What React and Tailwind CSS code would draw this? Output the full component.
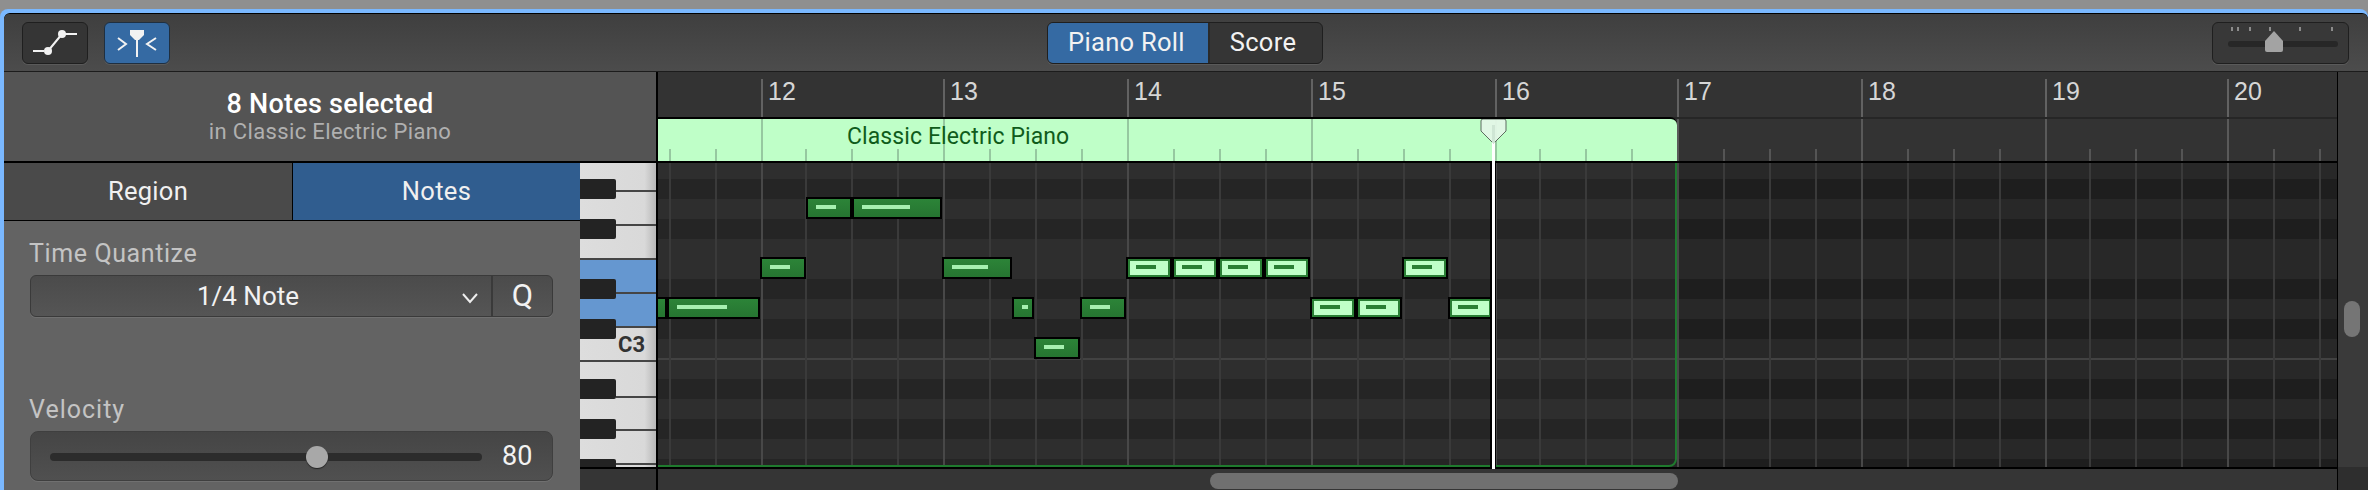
import React from "react";

const sf = "font-['Roboto','Inter',sans-serif]";
const bars = [761, 943, 1127, 1311, 1495, 1677, 1861, 2045, 2227];
const beats = [669, 715, 805, 851, 897, 989, 1035, 1081, 1173, 1219, 1265, 1357, 1403, 1449, 1539, 1585, 1631, 1723, 1769, 1815, 1907, 1953, 1999, 2089, 2135, 2181, 2273, 2319];
const rows = [[16, 0], [20, 1], [20, 0], [20, 1], [40, 0], [20, 1], [20, 0], [20, 1], [40, 0], [20, 1], [20, 0], [20, 1], [20, 0], [8, 1]];
const notes = [
  [658, 667, 134, 0, false, true],
  [667, 760, 134, 50, false],
  [806, 852, 34, 20, false],
  [852, 942, 34, 48, false],
  [760, 806, 94, 20, false],
  [942, 1012, 94, 36, false],
  [1012, 1034, 134, 6, false],
  [1034, 1080, 174, 20, false],
  [1080, 1126, 134, 20, false],
  [1126, 1172, 94, 20, true],
  [1172, 1218, 94, 20, true],
  [1218, 1264, 94, 20, true],
  [1264, 1310, 94, 20, true],
  [1402, 1448, 94, 20, true],
  [1310, 1356, 134, 20, true],
  [1356, 1402, 134, 20, true],
  [1448, 1493, 134, 20, true],
];
const blackKeys = [179, 219, 279, 319, 379, 419, 459];
const keyLines = [[190, 0], [224, 0], [258, 1], [292, 0], [326, 0], [360, 1], [396, 0], [429, 0], [463, 0]];
const sliderTicks = [2231, 2237, 2249, 2269, 2299, 2331];

function Note({ a, b, top, dash, sel, bare }) {
  return (
    <div
      className={`absolute h-[22px] border-2 border-black ${sel ? "bg-[#bfffc8] shadow-[inset_0_0_0_2px_#2a7f35]" : "bg-gradient-to-b from-[#2c8438] to-[#267531]"} ${bare ? "border-l-0" : ""}`}
      style={{ left: a - 658, width: b - a, top }}
    >
      {dash > 0 && !bare && (
        <div className={`absolute left-[8px] top-[6px] h-[4px] ${sel ? "bg-[#2a7f35]" : "bg-[#a6f0b0]"}`} style={{ width: dash }} />
      )}
    </div>
  );
}

function Rows({ light, dark }) {
  return (
    <>
      {rows.map(([h, d], i) => (
        <div key={i} className={d ? dark : light} style={{ height: h }} />
      ))}
    </>
  );
}

export default function App() {
  return (
    <div className={`${sf} w-[2368px] h-[490px] bg-[#8f8f8f] pt-[9px] overflow-hidden`}>
      <div className="h-[481px] bg-[#7ab8ff] rounded-t-[8px] pl-[4px] pt-[4px] pr-0 flex flex-col">
        <div className="flex-1 min-h-0 bg-black rounded-tl-[6px] rounded-tr-[6px] pt-[1px] flex flex-col overflow-hidden">
          {/* Toolbar */}
          <div className="h-[57px] shrink-0 bg-gradient-to-b from-[#3f3f3f] to-[#4c4c4c] flex items-center pl-[18px] pr-[19px] rounded-t-[5px]">
            <div className="w-[66px] h-[42px] rounded-[6px] bg-[#353535] border border-[#1f1f1f] shadow-[0_1px_0_#5a5a5a] flex items-center justify-center">
              <svg width="46" height="28" viewBox="0 0 46 28" fill="none" stroke="#f2f2f2" strokeWidth="2">
                <path d="M1 22H12M16 22L30 5M30 5H45" />
                <circle cx="16" cy="22" r="4" fill="#f2f2f2" stroke="none" />
                <circle cx="30" cy="5" r="4" fill="#f2f2f2" stroke="none" />
              </svg>
            </div>
            <div className="ml-[16px] w-[66px] h-[42px] rounded-[6px] bg-[#356aa3] border border-[#1f2f40] shadow-[0_1px_0_#5a5a5a] flex items-center justify-center">
              <svg width="40" height="28" viewBox="0 0 40 28" fill="none" stroke="#f2f2f2" strokeWidth="2">
                <path d="M1 9L9 15L1 21M39 9L30 15L39 21" />
                <path d="M20 8V28" />
                <path d="M13 1H27V6L22 11H18L13 6Z" fill="#f2f2f2" stroke="none" />
              </svg>
            </div>
            <div className="ml-[877px] w-[276px] h-[42px] rounded-[6px] bg-[#353535] border border-[#1f1f1f] shadow-[0_1px_0_#5a5a5a] flex overflow-hidden text-[25.5px] text-[#f2f2f2]">
              <div className="w-[160px] bg-[#356aa3] flex items-center justify-center tracking-[0.3px] pr-[3px]">Piano Roll</div>
              <div className="w-[2px] bg-[#2a2a2a]" />
              <div className="flex-1 flex items-center justify-center pr-[6px] tracking-[0.3px]">Score</div>
            </div>
            <div className="ml-auto relative w-[137px] h-[42px] rounded-[6px] bg-[#383838] border border-[#1f1f1f] shadow-[0_1px_0_#5a5a5a]">
              {sliderTicks.map((x) => (
                <div key={x} className="absolute top-[4px] w-[2px] h-[4px] bg-[#8c8c8c]" style={{ left: x - 2213 }} />
              ))}
              <div className="absolute left-[15px] top-[18px] w-[110px] h-[6px] rounded-full bg-[#272727]" />
              <svg className="absolute left-[51px] top-[8px]" width="20" height="22" viewBox="0 0 20 22">
                <path d="M10 0L19 10V19Q19 21 17 21H3Q1 21 1 19V10Z" fill="#a3a3a3" />
              </svg>
            </div>
          </div>

          <div className="h-[1px] shrink-0 bg-[#1c1c1c]" />

          {/* Body */}
          <div className="flex-1 min-h-0 flex">
            {/* Left column */}
            <div className="w-[652px] shrink-0 flex flex-col">
              <div className="h-[89px] shrink-0 bg-[#545454] flex flex-col items-center justify-center pt-[1px]">
                <div className="text-[27px] leading-[30px] font-medium text-white tracking-[0.25px]">8 Notes selected</div>
                <div className="text-[22px] leading-[26px] text-[#b0b0b0] tracking-[0.35px]">in Classic Electric Piano</div>
              </div>
              <div className="h-[2px] shrink-0 bg-black" />
              <div className="flex-1 min-h-0 flex">
                <div className="w-[576px] shrink-0 flex flex-col">
                  <div className="h-[57px] shrink-0 flex text-[25.5px] tracking-[0.3px] text-[#f0f0f0]">
                    <div className="w-[288px] bg-[#4a4a4a] flex items-center justify-center">Region</div>
                    <div className="w-[1px] bg-black" />
                    <div className="flex-1 bg-[#305d8f] flex items-center justify-center">Notes</div>
                  </div>
                  <div className="h-[1px] shrink-0 bg-black" />
                  <div className="flex-1 bg-[#636363] pl-[25px] pr-[27px] flex flex-col">
                    <div className="mt-[19px] text-[25px] leading-[28px] tracking-[0.6px] text-[#c4c4c4]">Time Quantize</div>
                    <div className="ml-[1px] mt-[7px] h-[42px] rounded-[6px] bg-gradient-to-b from-[#4b4b4b] to-[#555555] border border-[#3a3a3a] shadow-[0_1px_0_#707070] flex text-[#f2f2f2] text-[26px]">
                      <div className="w-[460px] relative flex items-center justify-center pr-[26px]">
                        1/4 Note
                        <svg className="absolute left-[431px] top-[17px]" width="16" height="11" viewBox="0 0 16 11" fill="none" stroke="#eeeeee" strokeWidth="2">
                          <path d="M1 1L8 9L15 1" />
                        </svg>
                      </div>
                      <div className="w-[2px] bg-[#3a3a3a]" />
                      <div className="flex-1 flex items-center justify-center text-[31px]">Q</div>
                    </div>
                    <div className="mt-[79px] text-[25px] leading-[28px] tracking-[1px] text-[#c4c4c4]">Velocity</div>
                    <div className="ml-[1px] mt-[7px] h-[50px] rounded-[8px] bg-gradient-to-b from-[#454545] to-[#505050] border border-[#3f3f3f] shadow-[0_1px_0_#707070] relative shrink-0">
                      <div className="absolute left-[19px] top-[21px] w-[432px] h-[8px] rounded-full bg-[#2c2c2c]" />
                      <div className="absolute left-[275px] top-[14px] w-[22px] h-[22px] rounded-full bg-[#a8a8a8] shadow-[0_1px_1px_#222]" />
                      <div className="absolute left-[471px] top-[9px] leading-[30px] text-[27px] text-[#f2f2f2]">80</div>
                    </div>
                  </div>
                </div>
                {/* Piano */}
                <div className="w-[76px] shrink-0 flex flex-col">
                  <div className="h-[304px] shrink-0 relative overflow-hidden bg-gradient-to-r from-[#dddddd] via-[#d9d9d9] via-85% to-[#b8b8b8]">
                    <div className="absolute left-0 right-0 top-[95px] h-[34px] bg-[#6597d0]" />
                    <div className="absolute left-0 right-0 top-[129px] h-[34px] bg-[#6597d0]" />
                    {keyLines.map(([y, full]) => (
                      <div key={y} className="absolute right-0 h-[2px] bg-[#454545]" style={{ top: y - 163, left: full ? 0 : 36 }} />
                    ))}
                    {blackKeys.map((y) => (
                      <div key={y} className="absolute left-0 w-[36px] h-[20px] rounded-r-[2px] bg-[#232323]" style={{ top: y - 163 }} />
                    ))}
                    <div className="absolute left-[38px] top-[170px] text-[22px] leading-[24px] font-bold text-[#333333]">C3</div>
                  </div>
                  <div className="flex-1 bg-[#353535] border-t-2 border-black" />
                </div>
              </div>
            </div>

            <div className="w-[2px] shrink-0 bg-black" />

            {/* Right column */}
            <div className="flex-1 min-w-0 flex">
              <div className="w-[1679px] shrink-0 flex flex-col">
                {/* Ruler */}
                <div className="h-[89px] shrink-0 bg-[#333333] relative overflow-hidden">
                  <div className="absolute left-0 right-0 top-[45px] h-[2px] bg-[#262626]" />
                  <div className="absolute left-0 top-[45px] w-[1019px] h-[44px] bg-black rounded-tr-[7px]">
                    <div className="mt-[2px] w-[1019px] h-[42px] bg-[#bfffc8] rounded-tr-[6px]" />
                  </div>
                  {bars.map((x, i) => (
                    <React.Fragment key={x}>
                      <div className="absolute top-[7px] w-[2px] h-[38px] bg-[#626262]" style={{ left: x - 658 }} />
                      <div className={`absolute top-[47px] w-[2px] h-[42px] ${x < 1677 ? "bg-[#96c8a0]" : "bg-[#5a5a5a]"}`} style={{ left: x - 658 }} />
                      <div className="absolute top-[3px] font-['Liberation_Sans',sans-serif] text-[25px] leading-[32px] text-[#d6d6d6]" style={{ left: x - 658 + 7 }}>
                        {12 + i}
                      </div>
                    </React.Fragment>
                  ))}
                  {beats.map((x) => (
                    <div key={x} className={`absolute top-[77px] w-[2px] h-[12px] ${x < 1677 ? "bg-[#96c8a0]" : "bg-[#555555]"}`} style={{ left: x - 658 }} />
                  ))}
                  <span className="absolute left-[189px] top-[47px] text-[23px] leading-[36px] text-[#0f5c1b] tracking-[0.1px]">Classic Electric Piano</span>
                </div>
                <div className="h-[2px] shrink-0 bg-black" />
                {/* Grid */}
                <div className="h-[304px] shrink-0 relative overflow-hidden flex">
                  <div className="w-[1019px] shrink-0 flex flex-col">
                    <Rows light="bg-[#2e2e2e]" dark="bg-[#252525]" />
                  </div>
                  <div className="flex-1 flex flex-col">
                    <Rows light="bg-[#282828]" dark="bg-[#1e1e1e]" />
                  </div>
                  <div className="absolute left-0 right-0 top-[195px] h-[2px] bg-[#424242]" />
                  {[...bars, ...beats].map((x) => (
                    <div key={x} className={`absolute top-0 bottom-0 w-[2px] ${bars.includes(x) ? "bg-[#484848]" : "bg-[#3a3a3a]"}`} style={{ left: x - 658 }} />
                  ))}
                  <div className="absolute left-[-6px] top-[-6px] w-[1025px] h-[310px] border-2 border-[#1f7a2e] rounded-br-[8px]" />
                  {notes.map(([a, b, top, dash, sel, bare], i) => (
                    <Note key={i} a={a} b={b} top={top} dash={dash} sel={sel} bare={bare} />
                  ))}
                </div>
                <div className="h-[2px] shrink-0 bg-black" />
                {/* Horizontal scrollbar */}
                <div className="flex-1 bg-[#353535] pt-[4px] pl-[552px]">
                  <div className="w-[468px] h-[16px] rounded-full bg-[#707070]" />
                </div>
              </div>
              <div className="w-[1px] shrink-0 bg-black" />
              {/* Vertical scrollbar */}
              <div className="flex-1 flex flex-col">
                <div className="h-[395px] bg-[#3a3a3a] pl-[6px] pt-[229px]">
                  <div className="w-[16px] h-[36px] rounded-full bg-[#757575]" />
                </div>
                <div className="flex-1 bg-[#2e2e2e]" />
              </div>
            </div>
          </div>
        </div>
      </div>

      {/* Playhead lies over the ruler and grid */}
      <div className="absolute left-[1490px] top-[161px] w-[6px] h-[308px] bg-black" />
      <div className="absolute left-[1492px] top-[125px] w-[3px] h-[344px] bg-white" />
      <svg className="absolute left-[1480px] top-[119px]" width="27" height="25" viewBox="0 0 27 25">
        <path d="M3 0H24Q26 0 26 2V12L15 23Q13.5 24.5 12 23L1 12V2Q1 0 3 0Z" fill="#e3f7e7" fillOpacity="0.95" stroke="#5d6b60" strokeWidth="1" />
        <rect x="12" y="6" width="3" height="18" fill="#cfe6d5" />
      </svg>
    </div>
  );
}
